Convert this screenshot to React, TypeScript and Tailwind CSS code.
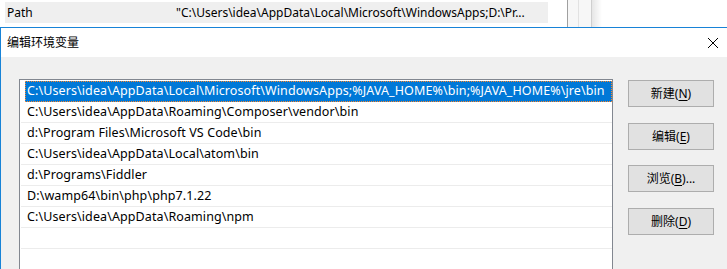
import React from "react";

const rows = [
  "C:\\Users\\idea\\AppData\\Local\\Microsoft\\WindowsApps;%JAVA_HOME%\\bin;%JAVA_HOME%\\jre\\bin",
  "C:\\Users\\idea\\AppData\\Roaming\\Composer\\vendor\\bin",
  "d:\\Program Files\\Microsoft VS Code\\bin",
  "C:\\Users\\idea\\AppData\\Local\\atom\\bin",
  "d:\\Programs\\Fiddler",
  "D:\\wamp64\\bin\\php\\php7.1.22",
  "C:\\Users\\idea\\AppData\\Roaming\\npm",
  "",
  "",
];

function Btn({ label, k, suffix }: { label: string; k: string; suffix?: string }) {
  return (
    <div className="h-[27px] w-[86px] border border-[#adadad] bg-[#e1e1e1] flex items-center justify-center text-[12px] text-black leading-none">
      <span>
        {label}(<span className="underline underline-offset-2">{k}</span>){suffix}
      </span>
    </div>
  );
}

export default function App() {
  return (
    <div
      className="w-[727px] h-[269px] overflow-hidden bg-white flex flex-col"
      style={{ fontFamily: '"Noto Sans", "Noto Sans CJK SC", sans-serif' }}
    >
      {/* background window strip */}
      <div className="h-[27px] flex shrink-0 bg-white">
        <div className="w-[5px]" />
        <div className="mt-[2px] h-[21px] w-[543px] bg-[#efefef] flex items-center text-[12px] text-black">
          <span className="ml-[2px] w-[169px]">Path</span>
          <span>"C:\Users\idea\AppData\Local\Microsoft\WindowsApps;D:\Pr...</span>
        </div>
        <div className="w-[19px]" />
        <div className="w-[1px] bg-[#a0a0a0]" />
        <div className="w-[10px] bg-[#f7f7f7]" />
        <div className="w-[1px] bg-[#e2e2e2]" />
        <div className="w-[12px] bg-[#f7f7f7]" />
        <div className="w-[1px] bg-[#cfcfcf]" />
        <div className="w-[10px] bg-gradient-to-r from-[#e6e6e6] to-white" />
      </div>

      {/* dialog */}
      <div className="flex-1 flex flex-col border-t border-l border-[#1883d7]">
        <div className="h-[29px] shrink-0 bg-white flex items-center justify-between">
          <span className="ml-[6px] text-[12px] text-black">编辑环境变量</span>
          <svg width="12" height="12" viewBox="0 0 12 12" className="mr-[8px] mt-[1px]">
            <path d="M1 1 L11 11 M11 1 L1 11" stroke="#000" strokeWidth="1" />
          </svg>
        </div>
        <div className="flex-1 bg-[#f0f0f0] pt-[22px] pl-[18px] flex">
          <div className="w-[594px] h-[200px] border border-[#828790] bg-white p-[1px] pr-0">
            {rows.map((r, i) =>
              i === 0 ? (
                <div key={i} className="h-[21px] flex pl-[4px]">
                  <div className="flex-1 bg-[#0078d7] border border-dotted border-[#ff8728] text-white text-[12.5px] tracking-[0.1px] flex items-center pl-[1px] whitespace-nowrap overflow-hidden">
                    {r}
                  </div>
                </div>
              ) : (
                <div
                  key={i}
                  className="h-[21px] border-b border-[#ececec] text-[12.5px] tracking-[0.1px] text-black flex items-center pl-[6px] whitespace-nowrap"
                >
                  {r}
                </div>
              )
            )}
          </div>
          <div className="ml-[15px] mt-[1px] flex flex-col">
            <Btn label="新建" k="N" />
            <div className="h-[16px]" />
            <Btn label="编辑" k="E" />
            <div className="h-[15px]" />
            <Btn label="浏览" k="B" suffix="..." />
            <div className="h-[16px]" />
            <Btn label="删除" k="D" />
          </div>
        </div>
      </div>
    </div>
  );
}
